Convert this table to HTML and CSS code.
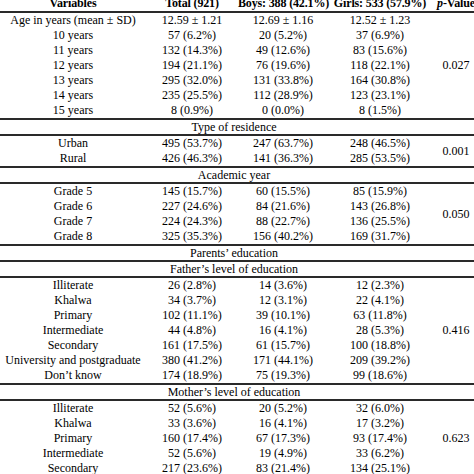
FILE: index.html
```html
<!DOCTYPE html>
<html lang="en">
<head>
<meta charset="utf-8">
<title>Sociodemographic characteristics</title>
<link rel="stylesheet" href="styles.css">
</head>
<body>
<table class="tbl">
  <colgroup>
    <col class="c-var"><col class="c-tot"><col class="c-boy"><col class="c-girl"><col class="c-p">
  </colgroup>
  <thead>
    <tr><th>Variables</th><th>Total (921)</th><th>Boys: 388 (42.1%)</th><th>Girls: 533 (57.9%)</th><th><i>p</i>-Value</th></tr>
  </thead>
  <tbody>
    <tr><td>Age in years (mean ± SD)</td><td>12.59 ± 1.21</td><td>12.69 ± 1.16</td><td>12.52 ± 1.23</td><td class="pe" rowspan="7">0.027</td></tr>
    <tr><td>10 years</td><td>57 (6.2%)</td><td>20 (5.2%)</td><td>37 (6.9%)</td></tr>
    <tr><td>11 years</td><td>132 (14.3%)</td><td>49 (12.6%)</td><td>83 (15.6%)</td></tr>
    <tr><td>12 years</td><td>194 (21.1%)</td><td>76 (19.6%)</td><td>118 (22.1%)</td></tr>
    <tr><td>13 years</td><td>295 (32.0%)</td><td>131 (33.8%)</td><td>164 (30.8%)</td></tr>
    <tr><td>14 years</td><td>235 (25.5%)</td><td>112 (28.9%)</td><td>123 (23.1%)</td></tr>
    <tr class="end"><td>15 years</td><td>8 (0.9%)</td><td>0 (0.0%)</td><td>8 (1.5%)</td></tr>

    <tr class="sec"><td colspan="5">Type of residence</td></tr>
    <tr><td>Urban</td><td>495 (53.7%)</td><td>247 (63.7%)</td><td>248 (46.5%)</td><td class="pe" rowspan="2">0.001</td></tr>
    <tr class="end"><td>Rural</td><td>426 (46.3%)</td><td>141 (36.3%)</td><td>285 (53.5%)</td></tr>

    <tr class="sec"><td colspan="5">Academic year</td></tr>
    <tr><td>Grade 5</td><td>145 (15.7%)</td><td>60 (15.5%)</td><td>85 (15.9%)</td><td class="pe" rowspan="4">0.050</td></tr>
    <tr><td>Grade 6</td><td>227 (24.6%)</td><td>84 (21.6%)</td><td>143 (26.8%)</td></tr>
    <tr><td>Grade 7</td><td>224 (24.3%)</td><td>88 (22.7%)</td><td>136 (25.5%)</td></tr>
    <tr class="end"><td>Grade 8</td><td>325 (35.3%)</td><td>156 (40.2%)</td><td>169 (31.7%)</td></tr>

    <tr class="sec"><td colspan="5">Parents’ education</td></tr>
    <tr class="sec"><td colspan="5">Father’s level of education</td></tr>
    <tr><td>Illiterate</td><td>26 (2.8%)</td><td>14 (3.6%)</td><td>12 (2.3%)</td><td class="pe" rowspan="7">0.416</td></tr>
    <tr><td>Khalwa</td><td>34 (3.7%)</td><td>12 (3.1%)</td><td>22 (4.1%)</td></tr>
    <tr><td>Primary</td><td>102 (11.1%)</td><td>39 (10.1%)</td><td>63 (11.8%)</td></tr>
    <tr><td>Intermediate</td><td>44 (4.8%)</td><td>16 (4.1%)</td><td>28 (5.3%)</td></tr>
    <tr><td>Secondary</td><td>161 (17.5%)</td><td>61 (15.7%)</td><td>100 (18.8%)</td></tr>
    <tr><td>University and postgraduate</td><td>380 (41.2%)</td><td>171 (44.1%)</td><td>209 (39.2%)</td></tr>
    <tr class="end"><td>Don’t know</td><td>174 (18.9%)</td><td>75 (19.3%)</td><td>99 (18.6%)</td></tr>

    <tr class="sec"><td colspan="5">Mother’s level of education</td></tr>
    <tr><td>Illiterate</td><td>52 (5.6%)</td><td>20 (5.2%)</td><td>32 (6.0%)</td><td class="pm" rowspan="5">0.623</td></tr>
    <tr><td>Khalwa</td><td>33 (3.6%)</td><td>16 (4.1%)</td><td>17 (3.2%)</td></tr>
    <tr><td>Primary</td><td>160 (17.4%)</td><td>67 (17.3%)</td><td>93 (17.4%)</td></tr>
    <tr><td>Intermediate</td><td>52 (5.6%)</td><td>19 (4.9%)</td><td>33 (6.2%)</td></tr>
    <tr><td>Secondary</td><td>217 (23.6%)</td><td>83 (21.4%)</td><td>134 (25.1%)</td></tr>
  </tbody>
</table>
</body>
</html>
```

FILE: styles.css
```css
html, body {
  margin: 0;
  padding: 0;
  background: #ffffff;
  overflow: hidden;
}

.tbl {
  font-family: "Liberation Serif", "Times New Roman", serif;
  font-size: 12px;
  color: #000000;
  border-collapse: separate;
  border-spacing: 0;
  table-layout: fixed;
  width: 480px;
  margin-top: -4px;
}

.c-var { width: 146px; }
.c-tot { width: 92px; }
.c-boy { width: 90px; }
.c-girl { width: 104px; }
.c-p { width: 48px; }

.tbl th,
.tbl td {
  padding: 0;
  height: 15px;
  line-height: 15px;
  text-align: center;
  vertical-align: middle;
  white-space: nowrap;
}

.tbl th {
  font-weight: bold;
  letter-spacing: -0.15px;
  border-bottom: 2px solid #2a2a2a;
}

.tbl .end td,
.tbl td.pe {
  border-bottom: 2px solid #2a2a2a;
}

.tbl .sec td {
  height: 14px;
  line-height: 14px;
  padding-right: 12px;
  border-bottom: 2px solid #2a2a2a;
}
```
